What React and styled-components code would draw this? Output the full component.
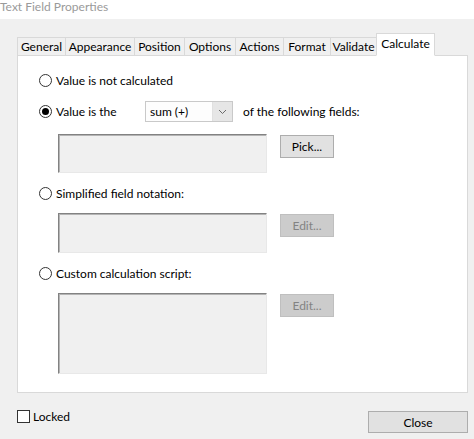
import React from 'react'
import styled, { createGlobalStyle } from 'styled-components'

const GlobalStyle = createGlobalStyle`
  html, body {
    margin: 0;
    padding: 0;
    background: #ffffff;
  }
  body {
    font-family: Lato, "Noto Sans", sans-serif;
    font-size: 12px;
    color: #000;
  }
`

const Window = styled.div`
  width: 474px;
  height: 439px;
  display: flex;
  flex-direction: column;
  overflow: hidden;
`

const TitleBar = styled.div`
  height: 19px;
  background: #ffffff;
  color: #9a9a9a;
  font-size: 12px;
  line-height: 14px;
  white-space: nowrap;
`

const Body = styled.div`
  flex: 1;
  background: #f0f0f0;
  padding: 14px 6px 0 17px;
  display: flex;
  flex-direction: column;
`

const TabStrip = styled.div`
  display: flex;
  align-items: flex-end;
  height: 23px;
  position: relative;
  z-index: 1;
  margin-bottom: -1px;
`

const Tab = styled.div`
  width: ${p => p.$w}px;
  height: ${p => (p.$active ? 23 : 19)}px;
  box-sizing: border-box;
  display: flex;
  align-items: center;
  justify-content: center;
  background: ${p => (p.$active ? '#ffffff' : '#f0f0f0')};
  border: 1px solid #d9d9d9;
  border-bottom: ${p => (p.$active ? '1px solid #ffffff' : '1px solid #d9d9d9')};
  margin-left: -1px;
  padding-bottom: ${p => (p.$active ? 3 : 0)}px;
  white-space: nowrap;
  &:first-child {
    margin-left: 0;
  }
`

const Panel = styled.div`
  height: 338px;
  box-sizing: border-box;
  background: #ffffff;
  border: 1px solid #d9d9d9;
  padding: 16px 0 0 21px;
  display: flex;
  flex-direction: column;
`

const RadioRow = styled.label`
  display: flex;
  align-items: center;
  height: ${p => p.$h || 16}px;
  margin-top: ${p => p.$mt || 0}px;
  white-space: nowrap;
`

const RadioDot = styled.span`
  width: 13px;
  height: 13px;
  box-sizing: border-box;
  border: 1px solid #333333;
  border-radius: 50%;
  margin-right: 4px;
  display: flex;
  align-items: center;
  justify-content: center;
  flex-shrink: 0;
  &::after {
    content: '';
    width: 7px;
    height: 7px;
    border-radius: 50%;
    background: #000000;
    display: ${p => (p.$checked ? 'block' : 'none')};
  }
`

const LeadLabel = styled.span`
  width: 89px;
`

const Combo = styled.div`
  width: 88px;
  height: 21px;
  box-sizing: border-box;
  border: 1px solid #c9c9c9;
  display: flex;
  background: #fdfdfd;
`

const ComboText = styled.span`
  flex: 1;
  padding-left: 4px;
  display: flex;
  align-items: center;
`

const ComboArrow = styled.span`
  width: 19px;
  background: #e6e6e6;
  border-left: 1px solid #e0e0e0;
  display: flex;
  align-items: center;
  justify-content: center;
`

const TrailLabel = styled.span`
  margin-left: 10px;
`

const FieldRow = styled.div`
  display: flex;
  align-items: flex-start;
  gap: 13px;
  margin-top: 12px;
  margin-left: 19px;
`

const TextArea = styled.div`
  width: 209px;
  height: ${p => p.$h}px;
  box-sizing: border-box;
  background: #f0f0f0;
  border-top: 1px solid #828282;
  border-left: 1px solid #828282;
  border-right: 1px solid #e8e8e8;
  border-bottom: 1px solid #e8e8e8;
  box-shadow: inset 1px 1px 0 #b4b4b4;
`

const Button = styled.div`
  width: ${p => p.$w}px;
  height: ${p => p.$h}px;
  box-sizing: border-box;
  display: flex;
  align-items: center;
  justify-content: center;
  margin-top: 1px;
  background: ${p => (p.$disabled ? '#cccccc' : '#e1e1e1')};
  border: 1px solid ${p => (p.$disabled ? '#bfbfbf' : '#adadad')};
  color: ${p => (p.$disabled ? '#838383' : '#000000')};
`

const Footer = styled.div`
  display: flex;
  justify-content: space-between;
  align-items: flex-start;
  padding-top: 17px;
`

const CheckRow = styled.label`
  display: flex;
  align-items: center;
  height: 13px;
`

const CheckBox = styled.span`
  width: 13px;
  height: 13px;
  box-sizing: border-box;
  border: 1px solid #333333;
  background: #ffffff;
  margin-right: 3px;
`

const tabs = [
  ['General', 49],
  ['Appearance', 70],
  ['Position', 51],
  ['Options', 52],
  ['Actions', 49],
  ['Format', 48],
  ['Validate', 47],
  ['Calculate', 59],
]

function Chevron() {
  return (
    <svg width="9" height="6" viewBox="0 0 9 6">
      <path d="M1 1 L4.5 4.5 L8 1" fill="none" stroke="#6b6b6b" strokeWidth="1" />
    </svg>
  )
}

export default function App() {
  return (
    <Window>
      <GlobalStyle />
      <TitleBar>Text Field Properties</TitleBar>
      <Body>
        <TabStrip>
          {tabs.map(([name, w]) => (
            <Tab key={name} $w={w} $active={name === 'Calculate'}>{name}</Tab>
          ))}
        </TabStrip>
        <Panel>
          <RadioRow>
            <RadioDot />
            Value is not calculated
          </RadioRow>
          <RadioRow $h={21} $mt={13}>
            <RadioDot $checked />
            <LeadLabel>Value is the</LeadLabel>
            <Combo>
              <ComboText>sum (+)</ComboText>
              <ComboArrow><Chevron /></ComboArrow>
            </Combo>
            <TrailLabel>of the following fields:</TrailLabel>
          </RadioRow>
          <FieldRow>
            <TextArea $h={39} />
            <Button $w={54} $h={23}>Pick...</Button>
          </FieldRow>
          <RadioRow $mt={12}>
            <RadioDot />
            Simplified field notation:
          </RadioRow>
          <FieldRow>
            <TextArea $h={40} />
            <Button $w={54} $h={23} $disabled>Edit...</Button>
          </FieldRow>
          <RadioRow $mt={12}>
            <RadioDot />
            Custom calculation script:
          </RadioRow>
          <FieldRow>
            <TextArea $h={81} />
            <Button $w={54} $h={23} $disabled>Edit...</Button>
          </FieldRow>
        </Panel>
        <Footer>
          <CheckRow>
            <CheckBox />
            Locked
          </CheckRow>
          <Button $w={100} $h={22}>Close</Button>
        </Footer>
      </Body>
    </Window>
  )
}
